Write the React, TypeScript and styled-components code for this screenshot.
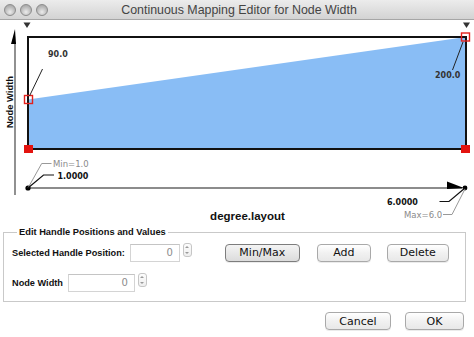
import React from 'react';
import styled, { createGlobalStyle } from 'styled-components';

const GlobalStyle = createGlobalStyle`
    html, body {
        margin: 0;
        padding: 0;
        background: #ffffff;
    }
    body {
        font-family: 'Liberation Sans', Arial, sans-serif;
    }
`;

const Window = styled.div`
    width: 474px;
    height: 337px;
    background: #ffffff;
    display: flex;
    flex-direction: column;
    overflow: hidden;
`;

const TitleBar = styled.div`
    height: 19px;
    border-bottom: 1px solid #a6a6a6;
    background: linear-gradient(#ececec, #d3d3d3);
    display: flex;
    align-items: center;
`;

const Lights = styled.div`
    display: flex;
    gap: 4px;
    padding-left: 4px;
`;

const Light = styled.span`
    width: 12px;
    height: 12px;
    border-radius: 50%;
    box-sizing: border-box;
    border: 1px solid #8c8c8c;
    background: radial-gradient(circle at 50% 70%, #ececec 0%, #bcbcbc 55%, #9a9a9a 100%);
`;

const Title = styled.div`
    flex: 1;
    text-align: center;
    margin-right: 44px;
    font-size: 12.4px;
    color: #444;
`;

const ChartArea = styled.div`
    height: 206px;
`;

const Panel = styled.fieldset`
    margin: 1px 8px 0 3px;
    padding: 5px 0 9px 8px;
    border: 1px solid #c9c9c9;
    display: flex;
    flex-direction: column;
    gap: 11px;
    min-width: 0;
`;

const Legend = styled.legend`
    margin-left: 5px;
    padding: 0 2px;
    font-size: 9.3px;
    line-height: 11px;
    font-weight: bold;
    color: #111;
`;

const Row = styled.div`
    display: flex;
    align-items: center;
    height: 19px;
`;

const Label = styled.span`
    font-size: 9.2px;
    font-weight: bold;
    color: #111;
    margin-right: 5px;
`;

const NumberField = styled.div<{ $w: number }>`
    width: ${p => p.$w}px;
    height: 18px;
    box-sizing: border-box;
    border: 1px solid #d4d4d4;
    border-top-color: #c4c4c4;
    background: #fff;
    display: flex;
    align-items: center;
    justify-content: flex-end;
    padding-right: 6px;
    font-family: 'DejaVu Sans', sans-serif;
    font-size: 10px;
    color: #8c8c8c;
`;

const Spinner = styled.div`
    width: 9px;
    height: 14px;
    margin-left: 3px;
    box-sizing: border-box;
    border: 1px solid #c6c6c6;
    border-radius: 3px;
    background: linear-gradient(#fdfdfd, #eeeeee);
    display: flex;
    flex-direction: column;
    align-items: center;
    justify-content: space-around;
    align-self: flex-start;
`;

const Arrow = styled.span<{ $down?: boolean }>`
    width: 0;
    height: 0;
    border-left: 2px solid transparent;
    border-right: 2px solid transparent;
    ${p => (p.$down ? 'border-top: 2px solid #9a9a9a;' : 'border-bottom: 2px solid #9a9a9a;')}
`;

const Button = styled.div<{ $w: number; $focus?: boolean; $ml?: number }>`
    width: ${p => p.$w}px;
    height: 18px;
    margin-left: ${p => p.$ml || 0}px;
    box-sizing: border-box;
    border: 1px solid ${p => (p.$focus ? '#7d7d7d' : '#a9a9a9')};
    border-radius: 4px;
    background: ${p =>
        p.$focus
            ? 'linear-gradient(#f4f4f4, #dcdcdc)'
            : 'linear-gradient(#ffffff, #f1f1f1 50%, #e8e8e8)'};
    box-shadow: 0 1px 0 rgba(0, 0, 0, 0.08);
    display: flex;
    align-items: center;
    justify-content: center;
    font-family: 'DejaVu Sans', sans-serif;
    font-size: 11px;
    color: #111;
`;

const Footer = styled.div`
    display: flex;
    justify-content: flex-end;
    padding: 10px 10px 0 0;
    gap: 14px;
`;

const chartFont = "'DejaVu Sans', sans-serif";

const MappingChart: React.FC = () => (
    <svg width="474" height="206" viewBox="0 0 474 206">
        {/* handle markers on top */}
        <polygon points="23.5,2.5 30.5,2.5 27,8" fill="#333" />
        <polygon points="463,2.5 470,2.5 466.5,8" fill="#333" />

        {/* y axis */}
        <line x1="15" y1="22" x2="15" y2="175" stroke="#555" strokeWidth="1.3" />
        <polygon points="15,9 16,24 11,24" fill="#000" />
        <text
            x="9"
            y="82"
            transform="rotate(-90 9 82)"
            textAnchor="middle"
            dominantBaseline="central"
            fontFamily="'Liberation Sans', Arial, sans-serif"
            fontWeight="bold"
            fontSize="9.4"
            fill="#111"
        >
            Node Width
        </text>

        {/* mapping area */}
        <polygon points="28,79.5 466,17 466,129 28,129" fill="#89bdf5" />
        <rect x="28" y="17" width="438" height="112" fill="none" stroke="#111" strokeWidth="2" />

        <rect x="24.5" y="75.5" width="8" height="8" fill="none" stroke="#e3211c" strokeWidth="1.4" />
        <rect x="461.5" y="13" width="8" height="8" fill="none" stroke="#e3211c" strokeWidth="1.4" />
        <rect x="24" y="125" width="9" height="8" fill="#e3130f" />
        <rect x="461" y="125" width="9" height="8" fill="#e3130f" />

        <line x1="29.5" y1="76" x2="42.5" y2="49" stroke="#222" strokeWidth="1" />
        <text x="48" y="37" fontFamily={chartFont} fontWeight="bold" fontSize="8" fill="#333">
            90.0
        </text>
        <line x1="463" y1="22" x2="452.5" y2="50" stroke="#222" strokeWidth="1" />
        <text x="435" y="58" fontFamily={chartFont} fontWeight="bold" fontSize="8" fill="#333">
            200.0
        </text>

        {/* x axis */}
        <line x1="28" y1="168" x2="462" y2="168" stroke="#666" strokeWidth="1.5" />
        <polygon points="447,161.5 464,168 447,169" fill="#000" />
        <circle cx="28" cy="168" r="2.6" fill="#000" />
        <circle cx="465" cy="168" r="2.4" fill="#000" />

        <polyline points="28,168 41.7,143.5 51.5,143.5" fill="none" stroke="#999" strokeWidth="1" />
        <text x="53" y="147" fontFamily={chartFont} fontSize="8.5" fill="#8a8a8a">
            Min=1.0
        </text>
        <polyline points="28,168 43.5,155 54,155" fill="none" stroke="#111" strokeWidth="1.2" />
        <text x="57.5" y="159" fontFamily={chartFont} fontWeight="bold" fontSize="8" fill="#111">
            1.0000
        </text>

        <polyline points="465,168 449,181.5 439.5,181.5" fill="none" stroke="#111" strokeWidth="1.2" />
        <text x="387" y="185" fontFamily={chartFont} fontWeight="bold" fontSize="8" fill="#111">
            6.0000
        </text>
        <polyline points="465,169 452,194.5 443,194.5" fill="none" stroke="#999" strokeWidth="1" />
        <text x="404" y="198" fontFamily={chartFont} fontSize="8.5" fill="#8a8a8a">
            Max=6.0
        </text>

        <text
            x="247.5"
            y="199.5"
            textAnchor="middle"
            fontFamily="'Liberation Sans', Arial, sans-serif"
            fontWeight="bold"
            fontSize="11.5"
            fill="#111"
        >
            degree.layout
        </text>
    </svg>
);

const Stepper: React.FC = () => (
    <Spinner>
        <Arrow />
        <Arrow $down />
    </Spinner>
);

const App: React.FC = () => {
    return (
        <>
            <GlobalStyle />
            <Window>
                <TitleBar>
                    <Lights>
                        <Light />
                        <Light />
                        <Light />
                    </Lights>
                    <Title>Continuous Mapping Editor for Node Width</Title>
                </TitleBar>
                <ChartArea>
                    <MappingChart />
                </ChartArea>
                <Panel>
                    <Legend>Edit Handle Positions and Values</Legend>
                    <Row>
                        <Label>Selected Handle Position:</Label>
                        <NumberField $w={50}>0</NumberField>
                        <Stepper />
                        <Button $w={75} $ml={33} $focus>
                            Min/Max
                        </Button>
                        <Button $w={54} $ml={17}>
                            Add
                        </Button>
                        <Button $w={62} $ml={16}>
                            Delete
                        </Button>
                    </Row>
                    <Row>
                        <Label>Node Width</Label>
                        <NumberField $w={67}>0</NumberField>
                        <Stepper />
                    </Row>
                </Panel>
                <Footer>
                    <Button $w={66}>Cancel</Button>
                    <Button $w={59}>OK</Button>
                </Footer>
            </Window>
        </>
    );
};

export default App;
